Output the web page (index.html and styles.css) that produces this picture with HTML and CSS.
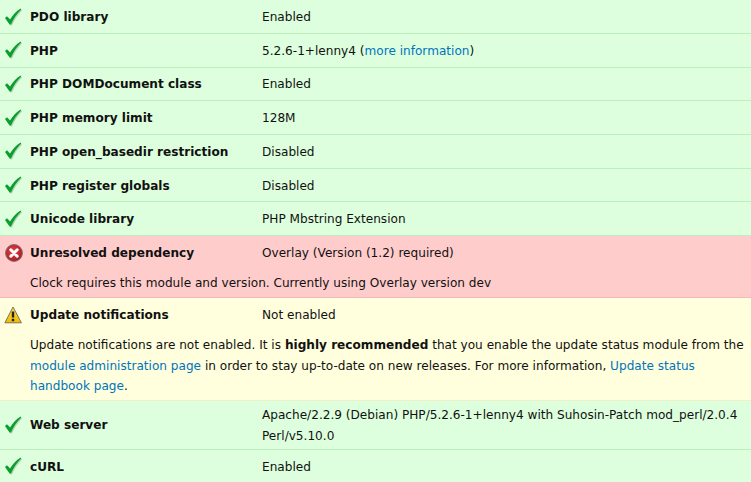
FILE: index.html
```html
<!DOCTYPE html>
<html lang="en">
<head>
<meta charset="utf-8">
<title>Status report</title>
<link rel="stylesheet" href="styles.css">
</head>
<body>
<svg class="defs" width="0" height="0" aria-hidden="true">
  <defs>
    <radialGradient id="redball" cx="45%" cy="40%" r="60%">
      <stop offset="0" stop-color="#e8434a"/>
      <stop offset="1" stop-color="#a81c22"/>
    </radialGradient>
    <linearGradient id="amber" x1="0" y1="0" x2="0" y2="1">
      <stop offset="0" stop-color="#ffe34d"/>
      <stop offset="1" stop-color="#f2b800"/>
    </linearGradient>
    <symbol id="ok" viewBox="0 0 18 18">
      <path d="M2 11 L4 9.2 L7 12.5 C9.5 8.5 13 4.5 17.6 1.6 L18 2.4 C14 6.5 10.5 11.5 8 17.6 L6.6 17.6 Z" fill="#000" opacity=".18"/>
      <path d="M1 10 L3 8.2 L6 11.5 C8.5 7.5 12 3.5 16.6 .6 L17.2 1.4 C13 5.5 9.5 10.5 7 16.6 L5.6 16.6 Z" fill="#0a9f2c"/>
    </symbol>
    <symbol id="err" viewBox="0 0 18 18">
      <circle cx="9" cy="9" r="8.4" fill="url(#redball)" stroke="#85696b"/>
      <path d="M5.8 5.8 L12.2 12.2 M12.2 5.8 L5.8 12.2" stroke="#fff" stroke-width="3" stroke-linecap="round"/>
    </symbol>
    <symbol id="warn" viewBox="0 0 18 18">
      <path d="M9 1 L17.4 16.8 L.9 16.8 Z" fill="url(#amber)" stroke="#77735c" stroke-linejoin="round"/>
      <path d="M9 5.5 V11.5" stroke="#222" stroke-width="2.4"/>
      <rect x="7.8" y="12.8" width="2.4" height="2.4" fill="#222"/>
    </symbol>
  </defs>
</svg>
<table class="report">
  <tr class="ok"><td class="icon"><svg class="i"><use href="#ok"/></svg></td><td class="title">PDO library</td><td class="value">Enabled</td></tr>
  <tr class="ok"><td class="icon"><svg class="i"><use href="#ok"/></svg></td><td class="title">PHP</td><td class="value">5.2.6-1+lenny4 (<a href="#">more information</a>)</td></tr>
  <tr class="ok"><td class="icon"><svg class="i"><use href="#ok"/></svg></td><td class="title">PHP DOMDocument class</td><td class="value">Enabled</td></tr>
  <tr class="ok"><td class="icon"><svg class="i"><use href="#ok"/></svg></td><td class="title">PHP memory limit</td><td class="value">128M</td></tr>
  <tr class="ok"><td class="icon"><svg class="i"><use href="#ok"/></svg></td><td class="title">PHP open_basedir restriction</td><td class="value">Disabled</td></tr>
  <tr class="ok"><td class="icon"><svg class="i"><use href="#ok"/></svg></td><td class="title">PHP register globals</td><td class="value">Disabled</td></tr>
  <tr class="ok"><td class="icon"><svg class="i"><use href="#ok"/></svg></td><td class="title">Unicode library</td><td class="value">PHP Mbstring Extension</td></tr>
  <tr class="error merge"><td class="icon"><svg class="i"><use href="#err"/></svg></td><td class="title">Unresolved dependency</td><td class="value">Overlay (Version (1.2) required)</td></tr>
  <tr class="error desc"><td></td><td colspan="2">Clock requires this module and version. Currently using Overlay version dev</td></tr>
  <tr class="warning merge"><td class="icon"><svg class="i"><use href="#warn"/></svg></td><td class="title">Update notifications</td><td class="value">Not enabled</td></tr>
  <tr class="warning desc"><td></td><td colspan="2">Update notifications are not enabled. It is <strong>highly recommended</strong> that you enable the update status module from the <a href="#">module administration page</a> in order to stay up-to-date on new releases. For more information, <a href="#">Update status handbook page</a>.</td></tr>
  <tr class="ok"><td class="icon"><svg class="i"><use href="#ok"/></svg></td><td class="title">Web server</td><td class="value">Apache/2.2.9 (Debian) PHP/5.2.6-1+lenny4 with Suhosin-Patch mod_perl/2.0.4 Perl/v5.10.0</td></tr>
  <tr class="ok"><td class="icon"><svg class="i"><use href="#ok"/></svg></td><td class="title">cURL</td><td class="value">Enabled</td></tr>
</table>
</body>
</html>
```
FILE: styles.css
```css
html, body {
  margin: 0;
  height: 482px;
  overflow: hidden;
  background: #fff;
}
.defs {
  display: block;
  height: 0;
}
.report {
  width: 751px;
  border-collapse: separate;
  border-spacing: 0;
  table-layout: fixed;
  font-family: "DejaVu Sans", sans-serif;
  font-size: 12.1px;
  line-height: 20.7px;
  color: #111;
}
.report td {
  padding: 4.1px 4px 2.5px 0;
  vertical-align: middle;
  border-bottom: 1px solid #bdeebd;
}
.report .icon {
  width: 30px;
  height: 33.7px;
  padding: 0 0 0 4px;
  box-sizing: border-box;
}
.report tr:first-child .icon {
  height: 34px;
}
.report .title {
  width: 228px;
  font-weight: bold;
}
.i {
  display: block;
  width: 18px;
  height: 18px;
}
.error .i {
  margin: 1px 0 0 1px;
}
.ok { background: #dfd; }
.error { background: #fcc; }
.warning { background: #ffd; }
.report .merge td { border-bottom: 0; }
.report .merge .icon { height: 32.7px; }
.report .desc td { padding-bottom: 3.6px; }
.report .warning.desc td { padding-bottom: 2.9px; border-bottom-color: #eef0c8; }
.report .error.desc td { border-bottom-color: #f3b8b8; }
a {
  color: #0074bd;
  text-decoration: none;
}
```
